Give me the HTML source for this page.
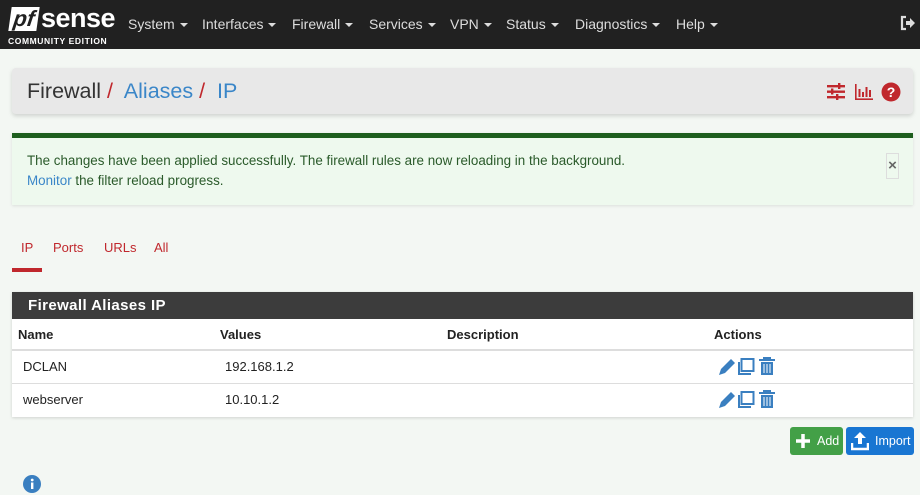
<!DOCTYPE html>
<html><head><meta charset="utf-8"><style>
*{margin:0;padding:0;box-sizing:border-box}
body{width:920px;height:495px;overflow:hidden;background:#f3f7f3;font-family:"Liberation Sans",sans-serif;position:relative;color:#222}
.nav{position:absolute;left:0;top:0;width:920px;height:49px;background:#212121}
.logo{position:absolute;left:8px;top:5px;color:#fff}
.logo .pf{position:absolute;left:2px;top:2px;width:28px;height:24px;background:#fff;color:#212121;font:italic bold 22px/24px "Liberation Sans";text-align:center;transform:skewX(-8deg)}
.logo .s{position:absolute;left:33px;top:-2px;font:bold 27px/30px "Liberation Sans";letter-spacing:-0.5px}
.logo .ce{position:absolute;left:0;top:31px;font:bold 8.5px "Liberation Sans";letter-spacing:0.6px;white-space:nowrap}
.menu{position:absolute;top:16px;font-size:14px;color:#ddd;white-space:nowrap}
.menu span{position:absolute}
.car{display:inline-block;border-left:4px solid transparent;border-right:4px solid transparent;border-top:4px solid #ddd;vertical-align:middle;margin-left:5px}
.crumb{position:absolute;left:12px;top:68px;width:901px;height:46px;background:#e8e8e8;border-radius:4px;box-shadow:0 2px 4px rgba(0,0,0,.15)}
.crumb .t{position:absolute;left:15px;top:11px;font-size:21.5px;color:#333;white-space:nowrap}
.red{color:#c0282d}.blue{color:#3a86c8}
.alert{position:absolute;left:12px;top:133px;width:901px;height:72px;background:#eef9ee;border-top:5px solid #1e5e1e;box-shadow:0 1px 3px rgba(0,0,0,.1)}
.alert p{position:absolute;left:15px;font-size:13.4px;color:#2a5a2a;white-space:nowrap}
.x{position:absolute;left:874px;top:15px;width:13px;height:26px;border:1px solid #ddd;font:bold 15px/24px "Liberation Sans";color:#666;text-align:center}
.tabs span{position:absolute;top:240px;font-size:13px;color:#c0282d}
.ul{position:absolute;left:12px;top:268px;width:30px;height:4px;background:#c0282d}
.panel{position:absolute;left:12px;top:292px;width:901px;height:125px;background:#fff;box-shadow:0 1px 3px rgba(0,0,0,.15)}
.ph{height:27px;background:#3c3c3c;color:#fff;font:bold 15px/27px "Liberation Sans";padding-left:16px;letter-spacing:.4px}
.c{position:absolute;font-size:13px;white-space:nowrap}
.b{font-weight:bold}
.hr{position:absolute;left:0;width:901px;height:1px;background:#ddd}
.btn{position:absolute;top:427px;height:28px;border-radius:3px;color:#fff;font-size:12.5px;line-height:28px}
</style></head><body>
<div class="nav">
 <div class="logo"><div class="pf">pf</div><div class="s">sense</div><div class="ce">COMMUNITY EDITION</div></div>
 <div class="menu">
  <span style="left:128px">System<i class="car"></i></span>
  <span style="left:202px">Interfaces<i class="car"></i></span>
  <span style="left:292px">Firewall<i class="car"></i></span>
  <span style="left:369px">Services<i class="car"></i></span>
  <span style="left:450px">VPN<i class="car"></i></span>
  <span style="left:506px">Status<i class="car"></i></span>
  <span style="left:575px">Diagnostics<i class="car"></i></span>
  <span style="left:676px">Help<i class="car"></i></span>
 </div>
 <svg style="position:absolute;left:900px;top:15px" width="16" height="16" viewBox="0 0 16 16"><path d="M6 2H2v12h4" stroke="#ddd" stroke-width="2.2" fill="none"/><path d="M6 6h4V3l5 5-5 5v-3H6z" fill="#ddd"/></svg>
</div>
<div class="crumb"><div class="t">Firewall <span class="red">/</span>&nbsp; <span class="blue">Aliases</span> <span class="red">/</span>&nbsp; <span class="blue">IP</span></div>
 <svg style="position:absolute;left:815px;top:15px" width="20" height="18" viewBox="0 0 20 18"><g fill="#c0282d"><rect x="0" y="2" width="18" height="2.4"/><rect x="0" y="7.5" width="18" height="2.4"/><rect x="0" y="13" width="18" height="2.4"/><rect x="11" y="0" width="2.4" height="6"/><rect x="4" y="5.5" width="2.4" height="6"/><rect x="9" y="11" width="2.4" height="6"/></g></svg>
 <svg style="position:absolute;left:843px;top:16px" width="18" height="16" viewBox="0 0 18 16"><g fill="#c0282d"><rect x="0" y="0" width="1.6" height="16"/><rect x="0" y="14.4" width="18" height="1.6"/><rect x="3.5" y="5" width="2" height="8"/><rect x="7" y="8" width="2" height="5"/><rect x="10.5" y="3" width="2" height="10"/><rect x="14" y="6" width="2" height="7"/></g></svg>
 <svg style="position:absolute;left:869px;top:14px" width="20" height="20" viewBox="0 0 20 20"><circle cx="10" cy="10" r="9.5" fill="#c0282d"/><text x="10" y="15" font-family="Liberation Sans" font-weight="bold" font-size="14" fill="#fff" text-anchor="middle">?</text></svg>
</div>
<div class="alert">
 <p style="top:15px">The changes have been applied successfully. The firewall rules are now reloading in the background.</p>
 <p style="top:35px"><span class="blue">Monitor</span> the filter reload progress.</p>
 <div class="x">×</div>
</div>
<div class="tabs"><span style="left:21px">IP</span><span style="left:53px">Ports</span><span style="left:104px">URLs</span><span style="left:154px">All</span></div>
<div class="ul"></div>
<div class="panel">
 <div class="ph">Firewall Aliases IP</div>
 <div class="c b" style="left:6px;top:35px">Name</div>
 <div class="c b" style="left:208px;top:35px">Values</div>
 <div class="c b" style="left:435px;top:35px">Description</div>
 <div class="c b" style="left:702px;top:35px">Actions</div>
 <div class="hr" style="top:57px;height:2px"></div>
 <div class="c" style="left:11px;top:67px">DCLAN</div>
 <div class="c" style="left:213px;top:67px">192.168.1.2</div>
 <div class="hr" style="top:91px"></div>
 <div class="c" style="left:11px;top:100px">webserver</div>
 <div class="c" style="left:213px;top:100px">10.10.1.2</div>
 <svg style="position:absolute;left:706px;top:64px" width="60" height="54" viewBox="0 0 60 54">
  <g id="r"><path d="M1 19l2-6 10-10 4 4-10 10z" fill="#3a7fc0"/><rect x="23.5" y="3" width="12" height="12" fill="none" stroke="#3a7fc0" stroke-width="2"/><path d="M21 6v12h12" fill="none" stroke="#3a7fc0" stroke-width="2"/><path d="M41 4h16M46 4V2h6v2" stroke="#3a7fc0" stroke-width="2" fill="none"/><rect x="43" y="6" width="12" height="13" fill="#3a7fc0"/><g stroke="#fff" stroke-width="1"><path d="M46 8v9M49 8v9M52 8v9"/></g></g>
  <use href="#r" y="33"/>
 </svg>
</div>
<div class="btn" style="left:790px;width:53px;background:#43a047;padding-left:27px">Add</div>
<svg style="position:absolute;left:795px;top:433px" width="16" height="16"><path d="M8 1v14M1 8h14" stroke="#fff" stroke-width="3.5"/></svg>
<div class="btn" style="left:846px;width:68px;background:#1976d2;padding-left:29px">Import</div>
<svg style="position:absolute;left:851px;top:431px" width="18" height="20" viewBox="0 0 18 20"><path d="M9 1l6 6h-4v6H7V7H3z" fill="#fff"/><path d="M1 12v6h16v-6" stroke="#fff" stroke-width="2.5" fill="none"/></svg>
<svg style="position:absolute;left:23px;top:475px" width="18" height="18"><circle cx="9" cy="9" r="9" fill="#3a7fc0"/><rect x="8" y="7.5" width="2.4" height="6.5" fill="#fff"/><circle cx="9.2" cy="5" r="1.4" fill="#fff"/></svg>
</body></html>
